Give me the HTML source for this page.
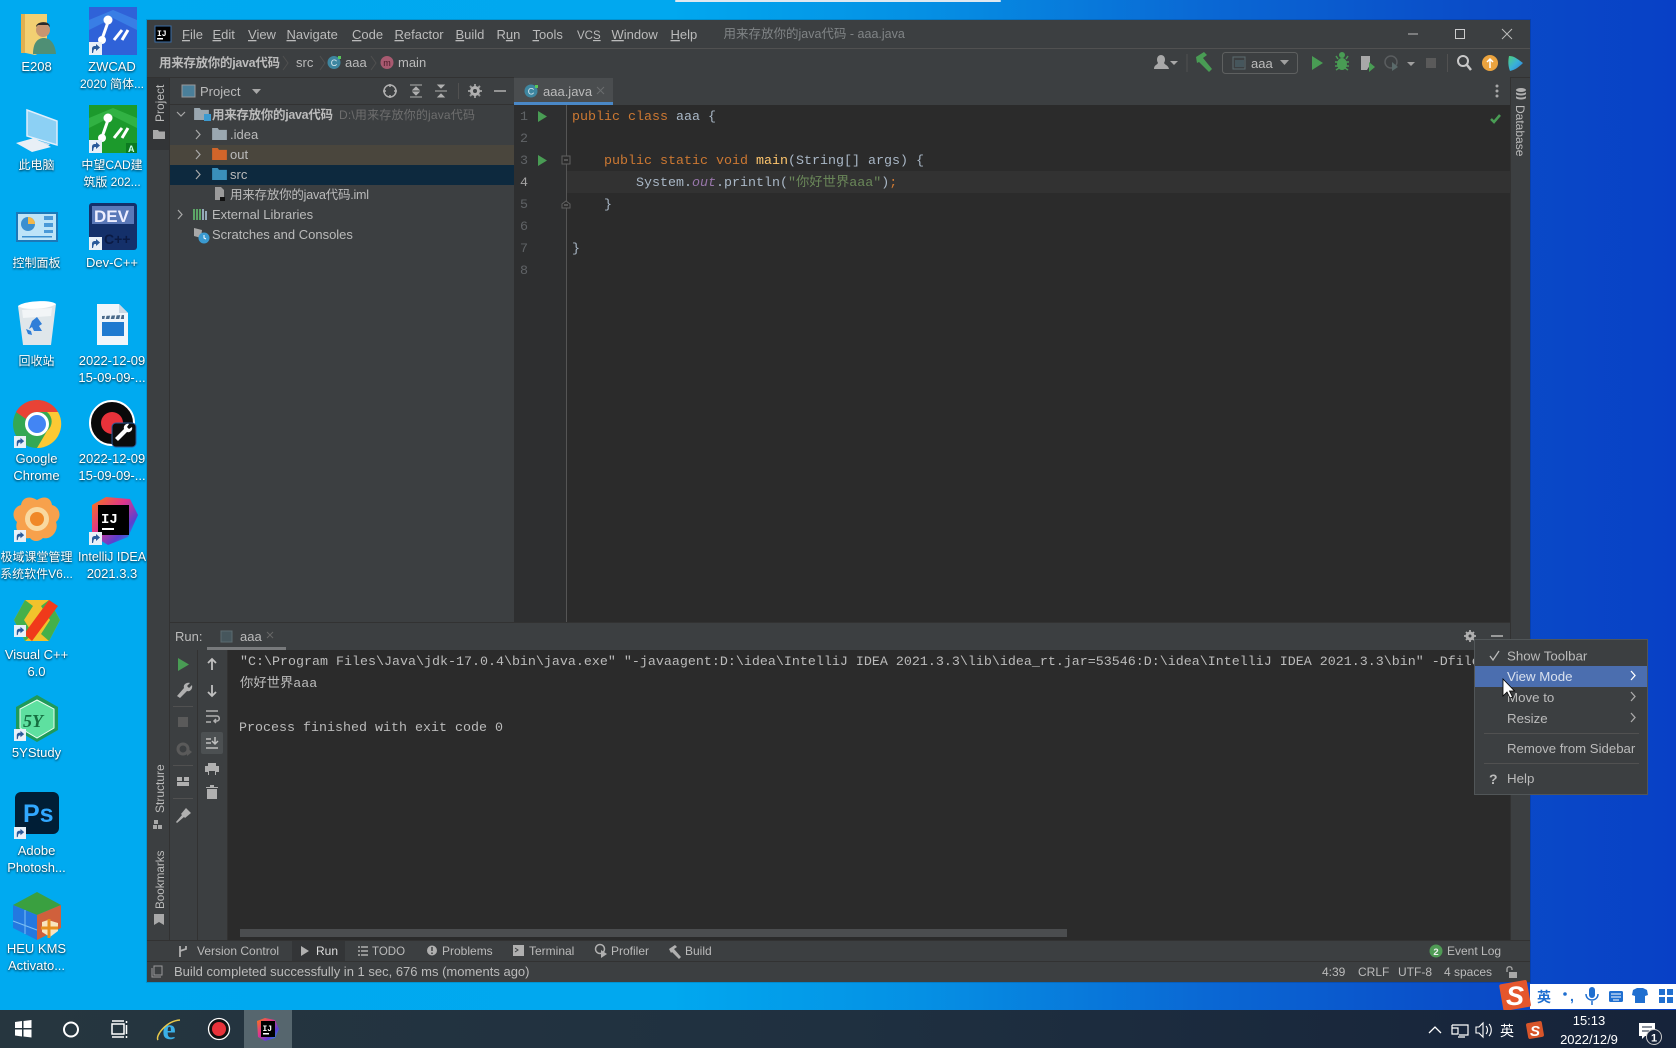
<!DOCTYPE html>
<html><head><meta charset="utf-8"><title>aaa.java</title>
<style>
html,body{margin:0;padding:0;width:1676px;height:1048px;overflow:hidden;background:linear-gradient(90deg,#00aaf0 0,#01a8ef 40%,#0590e4 55%,#0a68d4 72%,#0a4cc8 88%,#0840c6 100%)}
svg{position:absolute;left:0;top:0;display:block;filter:blur(.35px)}
text{font-family:"Liberation Sans","Noto Sans CJK SC",sans-serif;font-size:13px;fill:#bbb;white-space:pre}
.s12{font-size:12px}
.mono{font-family:"Liberation Mono","Noto Sans CJK SC",monospace;font-size:13.33px}
.k{fill:#cc7832}.t{fill:#a9b7c6}.n{fill:#606366}
.lb text{fill:#fff;text-anchor:middle}
.u{text-decoration:underline}
</style></head><body>
<svg width="1676" height="1048" viewBox="0 0 1676 1048" xmlns="http://www.w3.org/2000/svg">
<defs>
<symbol id="fd" viewBox="0 0 16 13" overflow="visible"><path d="M0 0h6l1.500 2H16v11H0z"/></symbol>
<symbol id="sc" viewBox="0 0 13 13" overflow="visible"><rect width="13" height="13" fill="#e8f0f8"/><path d="M3 11V7c0-2 1-3 3-3h1V2l4 3.500L7 9V7H6c-1 0-1.500 1-1.500 2l-.5 2z" fill="#2a5a9a"/></symbol>
<linearGradient id="tb" x1="0" x2="1"><stop offset="0" stop-color="#26363f"/><stop offset=".5" stop-color="#1f3040"/><stop offset="1" stop-color="#16233a"/></linearGradient>
<linearGradient id="dl" x1="0" y1="0" x2="1" y2="1"><stop offset="0" stop-color="#4fd07a"/><stop offset=".5" stop-color="#3ab0d8"/><stop offset="1" stop-color="#2a78d8"/></linearGradient>
<linearGradient id="ij" x1="0" y1="0" x2="1" y2="1"><stop offset="0" stop-color="#f97a12"/><stop offset=".4" stop-color="#e0358c"/><stop offset=".7" stop-color="#5a40d0"/><stop offset="1" stop-color="#17b8e8"/></linearGradient>
</defs>

<!-- top popup remnant -->
<rect x="675" y="0" width="326" height="2" rx="1" fill="#dfe8f0"/>

<!-- desktop icons -->
<!-- E208 -->
<path d="M21 14h26v36l-12 5-14-3z" fill="#f2cf72"/><path d="M21 14h4v39h-4z" fill="#e0b050"/>
<circle cx="43" cy="30" r="7" fill="#c89570"/><path d="M36 27c0-6 14-7 14 0l-2-2h-10z" fill="#2a2a2a"/>
<path d="M33 54c0-13 6-16 11-16s11 4 12 16z" fill="#4f8f75"/>
<!-- ZWCAD -->
<rect x="89" y="7" width="48" height="48" fill="#2f62d8"/><path d="M89 20l24-10 24 10v10l-24-12-24 12z" fill="#3c86e8" opacity=".8"/>
<path d="M101 42l7-20M114 40l8-10M122 40l6-10" stroke="#fff" stroke-width="3" fill="none"/><circle cx="108" cy="20" r="4.500" fill="#fff"/><circle cx="102" cy="40" r="4" fill="#fff"/>
<use href="#sc" x="89" y="42" width="13" height="13"/>
<!-- This PC -->
<path d="M27 110l30 11v24l-30-9z" fill="#8cd0f4" stroke="#dfeefb" stroke-width="1.500"/><path d="M40 141l10 3-4 4-10-2z" fill="#cde"/><path d="M16 143l18-5 17 9-19 5z" fill="#e8eff6"/>
<!-- Control panel -->
<rect x="16" y="212" width="42" height="30" fill="#1c78b8"/><rect x="18" y="214" width="38" height="26" fill="#bde4f8"/><circle cx="28" cy="224" r="7" fill="#3a8fd0"/><path d="M28 224v-7a7 7 0 017 7z" fill="#f2b84a"/><rect x="44" y="216" width="9" height="4" fill="#4a9ad8"/><rect x="44" y="223" width="9" height="4" fill="#4a9ad8"/><rect x="44" y="230" width="9" height="3" fill="#4a9ad8"/><rect x="22" y="236" width="30" height="1.500" fill="#3a8fd0"/>
<!-- 中望 -->
<rect x="89" y="105" width="48" height="48" fill="#1c9a2c"/><path d="M89 118l24-10 24 10v10l-24-12-24 12z" fill="#37b84a" opacity=".8"/>
<path d="M101 140l7-20M114 138l8-10M122 138l6-10" stroke="#fff" stroke-width="3" fill="none"/><circle cx="108" cy="118" r="4.500" fill="#fff"/><circle cx="102" cy="138" r="4" fill="#fff"/>
<rect x="126" y="143" width="11" height="10" fill="#0c7a20"/><text x="128" y="152" style="font-size:9px;font-weight:bold;fill:#cfe">A</text>
<use href="#sc" x="89" y="140" width="13" height="13"/>
<!-- Dev -->
<rect x="89" y="203" width="48" height="47" rx="3" fill="#14306a"/><rect x="92" y="206" width="42" height="18" fill="#5a78b8"/><text x="94" y="222" style="font-size:17px;font-weight:bold;fill:#eef">DEV</text><text x="104" y="244" style="font-size:14px;font-weight:bold;fill:#0a1a44">C++</text>
<use href="#sc" x="89" y="237" width="13" height="13"/>
<!-- Recycle -->
<path d="M18 306l38-2-5 41H23z" fill="#dfe6ea"/><path d="M18 306c5-5 33-7 38-2-6 5-32 7-38 2z" fill="#fff"/><path d="M22 310l30-2-1 8-28 2z" fill="#f2f5f7"/><path d="M37 317l5 7-3 2 3 5h-8l-2-4-3 2 3-8zM26 329l5 2 1 4-4-1z" fill="#2f7ed8"/>
<!-- Video file -->
<path d="M97 304h22l9 9v32H97z" fill="#f0f5fa"/><path d="M119 304l9 9h-9z" fill="#cbd8e4"/><rect x="102" y="322" width="22" height="14" fill="#1f7ad0"/><path d="M102 316l22-1v4h-22z" fill="#4a6a8a"/><path d="M106 315l-1 4m6-4l-1 4m6-4l-1 4m6-4l-1 4" stroke="#f0f5fa" stroke-width="1.500"/>
<!-- Chrome -->
<circle cx="37" cy="424" r="24" fill="#34a853"/><path d="M37 400a24 24 0 0121 12H37a12 12 0 00-11 7L16 412a24 24 0 0121-12z" fill="#e94335"/><path d="M58 412a24 24 0 01-21 36l10-17a12 12 0 000-19z" fill="#fcc934"/><circle cx="37" cy="424" r="12" fill="#fff"/><circle cx="37" cy="424" r="9" fill="#4285f4"/>
<use href="#sc" x="14" y="436" width="12" height="12"/>
<!-- Recorder tool -->
<circle cx="112" cy="423" r="22" fill="#0a0a0a" stroke="#fff" stroke-width="2"/><circle cx="112" cy="423" r="11" fill="#e8323a"/><rect x="112" y="423" width="24" height="24" rx="4" fill="#0c0c0c" stroke="#2a5a9a"/><path d="M118 441l9-9c3 1 6-2 5-5l-3 2-2-2 2-3c-3-1-6 2-5 5l-9 9z" fill="#fff"/>
<!-- Jiyu -->
<path d="M37 500c8-5 14-2 15 5 8 2 10 12 4 17 3 8-4 18-13 16-4 4-10 4-13 0-9 2-16-8-13-16-6-5-4-15 4-17 1-7 8-10 16-5z" fill="#f7a14c"/><circle cx="37" cy="519" r="12" fill="#f9d9a0"/><circle cx="37" cy="519" r="7" fill="#f08828"/>
<use href="#sc" x="14" y="530" width="12" height="12"/>
<!-- IDEA -->
<path d="M92 505l14-8 24 2 8 16-10 22-20 8-16-10z" fill="url(#ij)"/><rect x="98" y="505" width="31" height="30" fill="#000"/><text x="101" y="523" style="font-size:14px;font-weight:bold;fill:#fff;font-family:'Liberation Mono',monospace">IJ</text><rect x="102" y="528" width="12" height="2" fill="#fff"/>
<use href="#sc" x="89" y="532" width="13" height="13"/>
<!-- VC -->
<path d="M25 600h24l11 20-11 21H25L14 620z" fill="#f2c22c"/><path d="M14 620l11-20 8 6-9 14 9 14-8 7z" fill="#44b04a"/><path d="M60 620l-11-20-8 6 9 14-9 14 8 7z" fill="#44b04a"/><path d="M24 634l25-34 9 6-26 35z" fill="#f03a1a"/>
<use href="#sc" x="14" y="625" width="12" height="12"/>
<!-- 5Y -->
<path d="M37 695l21 12v23l-21 12-21-12v-23z" fill="#1f9a5a"/><path d="M37 700l17 9v19l-17 10-17-10v-19z" fill="#5ee0a0" stroke="#e8fff0"/><text x="23" y="727" style="font-size:18px;font-style:italic;font-weight:bold;fill:#156e40;font-family:'Liberation Serif',serif">5Y</text>
<use href="#sc" x="14" y="729" width="12" height="12"/>
<!-- PS -->
<rect x="15" y="792" width="44" height="42" rx="6" fill="#001e36"/><text x="23" y="822" style="font-size:25px;font-weight:bold;fill:#31a8ff">Ps</text>
<use href="#sc" x="14" y="827" width="12" height="12"/>
<!-- HEU -->
<path d="M13 905l24-13 24 13-24 10z" fill="#3aa040"/><path d="M13 905l24 10v25l-24-12z" fill="#2478e0"/><path d="M61 905l-24 10v25l24-12z" fill="#d0603c"/><path d="M42 922l6-2 10 3v8l-8 6-8-5z" fill="#f8e4c0"/><path d="M49 919v19M41 928h17" stroke="#e89020" stroke-width="3"/><path d="M25 910v24M13 921l24 9" stroke="#7cc0f4" stroke-width="1"/>

<g class="lb" style="filter:drop-shadow(0 1px 1px rgba(0,0,0,.85))">
<text x="36.500" y="71">E208</text>
<text x="112" y="71">ZWCAD</text><text x="112" y="88" class="s12">2020 简体...</text>
<text x="36.500" y="169" class="s12">此电脑</text>
<text x="112" y="169" class="s12">中望CAD建</text><text x="112" y="186" class="s12">筑版 202...</text>
<text x="36.500" y="267" class="s12">控制面板</text>
<text x="112" y="267">Dev-C++</text>
<text x="36.500" y="365" class="s12">回收站</text>
<text x="112" y="365">2022-12-09</text><text x="112" y="382">15-09-09-...</text>
<text x="36.500" y="463">Google</text><text x="36.500" y="480">Chrome</text>
<text x="112" y="463">2022-12-09</text><text x="112" y="480">15-09-09-...</text>
<text x="36.500" y="561" class="s12">极域课堂管理</text><text x="36.500" y="578" class="s12">系统软件V6...</text>
<text x="112" y="561" style="font-size:12.500px">IntelliJ IDEA</text><text x="112" y="578">2021.3.3</text>
<text x="36.500" y="659">Visual C++</text><text x="36.500" y="676">6.0</text>
<text x="36.500" y="757">5YStudy</text>
<text x="36.500" y="855">Adobe</text><text x="36.500" y="872">Photosh...</text>
<text x="36.500" y="953">HEU KMS</text><text x="36.500" y="970">Activato...</text>
</g>

<!-- IDE window -->
<rect x="146" y="19" width="1385" height="964" fill="#000" opacity=".12"/>
<rect x="147" y="20" width="1383" height="962" fill="#3c3f41"/>
<!-- title -->
<rect x="147" y="20" width="1383" height="28" fill="#3c3f41"/>
<rect x="147" y="48" width="1383" height="1" fill="#515151"/>
<rect x="155" y="26" width="16" height="16" fill="#000" stroke="#3a6ea8"/><text x="157" y="36" style="font-size:8px;font-weight:bold;fill:#fff;font-family:'Liberation Mono',monospace">IJ</text><rect x="157" y="38" width="6" height="1.500" fill="#fff"/>
<text x="182" y="39"><tspan class="u">F</tspan>ile</text>
<text x="212.500" y="39"><tspan class="u">E</tspan>dit</text>
<text x="248" y="39"><tspan class="u">V</tspan>iew</text>
<text x="286.500" y="39"><tspan class="u">N</tspan>avigate</text>
<text x="352" y="39"><tspan class="u">C</tspan>ode</text>
<text x="394.500" y="39"><tspan class="u">R</tspan>efactor</text>
<text x="455.500" y="39"><tspan class="u">B</tspan>uild</text>
<text x="496.500" y="39">R<tspan class="u">u</tspan>n</text>
<text x="532.500" y="39"><tspan class="u">T</tspan>ools</text>
<text x="577" y="39" style="font-size:11.500px">VC<tspan class="u">S</tspan></text>
<text x="611.500" y="39"><tspan class="u">W</tspan>indow</text>
<text x="670.500" y="39"><tspan class="u">H</tspan>elp</text>
<text x="723.500" y="38" style="fill:#808486;font-size:12.500px">用来存放你的java代码 - aaa.java</text>
<path d="M1408 34h10" stroke="#bbb" stroke-width="1"/><rect x="1455.500" y="29.500" width="9" height="9" fill="none" stroke="#ccc"/><path d="M1502 29l10 10m0-10l-10 10" stroke="#bbb" stroke-width="1"/>

<!-- breadcrumb -->
<rect x="147" y="77" width="1383" height="1" fill="#323232"/>
<text x="159" y="67" style="font-weight:bold;font-size:12.500px" textLength="121">用来存放你的java代码</text>
<path d="M283 56l5 7-5 7" stroke="#505050" fill="none"/>
<text x="296" y="67">src</text>
<path d="M320 56l5 7-5 7" stroke="#505050" fill="none"/>
<circle cx="334" cy="62.500" r="6.500" fill="#3e86a0"/><text x="334" y="66" text-anchor="middle" style="font-size:9px;fill:#d8e8ee">C</text><path d="M338 56l3 0 0 3-3 0z" fill="#5ac85a"/>
<text x="345" y="67">aaa</text>
<path d="M371 56l5 7-5 7" stroke="#505050" fill="none"/>
<circle cx="387" cy="62.500" r="6.500" fill="#a85a70"/><text x="387" y="66" text-anchor="middle" style="font-size:9px;fill:#4a1a28">m</text>
<text x="398" y="67">main</text>

<!-- right toolbar -->
<path d="M1154 69c0-4 3-4 4-6-2-3-1-8 3-8s5 5 3 8c1 2 4 2 5 6z" fill="#a8a8a8"/><path d="M1170 61h8l-4 4z" fill="#a8a8a8"/>
<rect x="1186.500" y="54" width="1" height="18" fill="#515151"/>
<path d="M1196 57l8-5 3 3-4 3 9 11-3 3-10-10-2 1z" fill="#499c54"/>
<rect x="1222.500" y="52.500" width="75" height="21" rx="3" fill="none" stroke="#5e6060"/>
<rect x="1233" y="57" width="12" height="12" fill="none" stroke="#5b6b70"/><rect x="1235" y="60" width="9" height="7" fill="#46565c"/>
<text x="1251" y="68" style="font-size:13px">aaa</text>
<path d="M1280 60h9l-4.500 5z" fill="#a0a0a0"/>
<path d="M1312 56l11 7-11 7z" fill="#499c54"/>
<ellipse cx="1342" cy="64" rx="5" ry="6" fill="#499c54"/><path d="M1336 56l2 3m10-3l-2 3m-11 3h3m8 0h3m-14 4h3m8 0h3m-13 4l3-2m6 0l3 2" stroke="#499c54" stroke-width="1.500"/><circle cx="1342" cy="55" r="3" fill="#499c54"/>
<path d="M1361 56h9v9l-3 5h-6z" fill="#a8a8a8"/><path d="M1369 62l6 5-6 5z" fill="#499c54"/>
<circle cx="1391" cy="62" r="6" fill="none" stroke="#5a5d5f" stroke-width="1.500"/><path d="M1392 62l6 5-6 4z" fill="#5a6a6a"/>
<path d="M1407 62h8l-4 4z" fill="#a0a0a0"/>
<rect x="1426" y="58" width="10" height="10" fill="#5a5a5a"/>
<rect x="1447" y="54" width="1" height="18" fill="#515151"/>
<circle cx="1463" cy="61" r="5" fill="none" stroke="#c8c8c8" stroke-width="2"/><path d="M1467 65l4 5" stroke="#c8c8c8" stroke-width="2.500"/>
<circle cx="1490" cy="63" r="8" fill="#eba33e"/><path d="M1490 68v-9m-3 3l3-3 3 3" stroke="#fff" fill="none" stroke-width="1.500"/>
<path d="M1509 56c5 0 7 2 14 7-4 4-8 7-13 8-2-5-2-10-1-15z" fill="url(#dl)"/>

<!-- left strip -->
<rect x="147" y="78" width="22" height="72" fill="#333537"/>
<rect x="169" y="78" width="1" height="862" fill="#323232"/>
<text transform="translate(164,122) rotate(-90)" style="font-size:12px">Project</text>
<path d="M153 130h5l1 1.500h6v7.500h-12z" fill="#a8a8a8"/>
<text transform="translate(164,813) rotate(-90)" style="font-size:12px">Structure</text>
<path d="M154 820h4v4h-4zm-1 5h4v4h-4zm5 0h4v4h-4z" fill="#a8a8a8"/>
<text transform="translate(164,909) rotate(-90)" style="font-size:11.700px">Bookmarks</text>
<path d="M154 914h10v11l-5-3-5 3z" fill="#a8a8a8"/>

<!-- project header -->
<rect x="182" y="85" width="13" height="12" fill="#4a7f9a" stroke="#9a9a9a"/>
<text x="200" y="96">Project</text>
<path d="M252 89h9l-4.500 5z" fill="#a8a8a8"/>
<circle cx="390" cy="91" r="6" fill="none" stroke="#b0b0b0" stroke-width="1.500"/><path d="M390 84v3m0 8v3m-7-7h3m8 0h3" stroke="#b0b0b0" stroke-width="1.500"/>
<path d="M410 85h12M410 97h12M413 90l3-3 3 3zM413 92l3 3 3-3z" stroke="#b0b0b0" fill="#b0b0b0"/>
<path d="M435 91h12M438 85l3 3 3-3zM438 97l3-3 3 3z" stroke="#b0b0b0" fill="#b0b0b0"/>
<rect x="458" y="83" width="1" height="16" fill="#515151"/>
<circle cx="475" cy="91" r="3.500" fill="none" stroke="#b0b0b0" stroke-width="3"/><path d="M475 84v14m-7-7h14m-12-5l10 10m0-10l-10 10" stroke="#b0b0b0" stroke-width="2" opacity=".8"/><circle cx="475" cy="91" r="2" fill="#3c3f41"/>
<path d="M494 91h12" stroke="#b0b0b0" stroke-width="1.500"/>
<rect x="170" y="104" width="344" height="1" fill="#323232"/>

<!-- tree -->
<rect x="170" y="145" width="344" height="20" fill="#4a463d"/>
<rect x="170" y="165" width="344" height="20" fill="#0d293e"/>
<path d="M177 112l4 4 4-4" stroke="#a8a8a8" fill="none" stroke-width="1.200"/>
<path d="M196 130l4 4.500-4 4.500M196 150l4 4.500-4 4.500M196 170l4 4.500-4 4.500M178 210l4 4.500-4 4.500" stroke="#a8a8a8" fill="none" stroke-width="1.200"/>
<use href="#fd" x="194" y="108" width="15" height="12" fill="#9aa7b0"/><rect x="204" y="114" width="7" height="7" fill="#3c9ad0"/>
<text x="212" y="119" style="font-weight:bold;font-size:12.500px" textLength="121">用来存放你的java代码</text>
<text x="339" y="119" style="fill:#6e6e6e;font-size:12px" textLength="136">D:\用来存放你的java代码</text>
<use href="#fd" x="212" y="128" width="15" height="12" fill="#9aa7b0"/><text x="230" y="139">.idea</text>
<use href="#fd" x="212" y="148" width="15" height="12" fill="#d2652a"/><text x="230" y="159">out</text>
<use href="#fd" x="212" y="168" width="15" height="12" fill="#3a8fba"/><text x="230" y="179">src</text>
<path d="M215 187h6l3 3v10h-9z" fill="#9a9a9a"/><rect x="220" y="197" width="5" height="4" fill="#111"/>
<text x="230" y="199" style="font-size:12.500px" textLength="139">用来存放你的java代码.iml</text>
<path d="M194 209v11m3-11v11m3-11v11" stroke="#5fb26a" stroke-width="1.800"/><path d="M203 209v11m3-9v9" stroke="#9fb6c8" stroke-width="1.800"/>
<text x="212" y="219">External Libraries</text>
<path d="M194 228l8 2-1 8-7-2z" fill="#a8a8a8"/><circle cx="204" cy="238" r="5.500" fill="#3a9ad0"/><path d="M204 235v3l2 1" stroke="#fff" fill="none"/>
<text x="212" y="239">Scratches and Consoles</text>

<!-- tab -->
<rect x="514" y="77" width="996" height="27" fill="#3c3f41"/>
<rect x="514" y="78" width="99" height="26" fill="#4a4d4f"/>
<rect x="514" y="102" width="99" height="3" fill="#4a88c7"/>
<circle cx="531" cy="91" r="6.500" fill="#3e86a0"/><text x="531" y="94.500" text-anchor="middle" style="font-size:9px;fill:#d8e8ee">C</text><path d="M535 85h3v3h-3z" fill="#5ac85a"/>
<text x="543" y="96">aaa.java</text>
<path d="M597 87l7 7m0-7l-7 7" stroke="#6a6d6f" stroke-width="1"/>
<circle cx="1497" cy="86" r="1.500" fill="#a8a8a8"/><circle cx="1497" cy="91" r="1.500" fill="#a8a8a8"/><circle cx="1497" cy="96" r="1.500" fill="#a8a8a8"/>

<!-- editor -->
<rect x="514" y="105" width="996" height="517" fill="#2b2b2b"/>
<rect x="514" y="105" width="52" height="517" fill="#2e2f30"/>
<rect x="566" y="171" width="944" height="22" fill="#323232"/>
<rect x="566" y="105" width="1" height="517" fill="#555"/>
<text class="mono n" x="520" y="120">1</text><text class="mono n" x="520" y="142">2</text><text class="mono n" x="520" y="164">3</text><text class="mono" x="520" y="186" style="fill:#a4a3a3">4</text><text class="mono n" x="520" y="208">5</text><text class="mono n" x="520" y="230">6</text><text class="mono n" x="520" y="252">7</text><text class="mono n" x="520" y="274">8</text>
<path d="M538 111l9 5.500-9 5.500zM538 155l9 5.500-9 5.500z" fill="#499c54"/>
<rect x="562" y="156" width="8" height="8" fill="#2b2b2b" stroke="#606060"/><path d="M564 160h4" stroke="#808080"/>
<path d="M562 208h8v-4l-4-3-4 3z" fill="#2b2b2b" stroke="#606060"/><path d="M564 205h4" stroke="#808080"/>
<text class="mono" x="572" y="120"><tspan class="k">public class </tspan><tspan class="t">aaa {</tspan></text>
<text class="mono" x="604" y="164"><tspan class="k">public static void </tspan><tspan style="fill:#ffc66d">main</tspan><tspan class="t">(String[] args) {</tspan></text>
<text class="mono" x="636" y="186"><tspan class="t">System.</tspan><tspan style="fill:#9876aa;font-style:italic">out</tspan><tspan class="t">.println(</tspan><tspan style="fill:#6a8759">"你好世界aaa"</tspan><tspan class="t">)</tspan><tspan class="k">;</tspan></text>
<text class="mono t" x="604" y="208">}</text>
<text class="mono t" x="572" y="252">}</text>
<path d="M1491 119l3 3 6-7" stroke="#499c54" stroke-width="2.500" fill="none"/>

<!-- right strip -->
<rect x="1510" y="78" width="1" height="862" fill="#323232"/>
<ellipse cx="1521" cy="90" rx="5" ry="2" fill="#b0b0b0"/><path d="M1516 92c1 2 9 2 10 0v2c-1 2-9 2-10 0zm0 4c1 2 9 2 10 0v2c-1 2-9 2-10 0z" fill="#b0b0b0"/>
<text transform="translate(1516,105) rotate(90)" style="font-size:12px">Database</text>

<!-- run panel -->
<rect x="170" y="622" width="1340" height="1" fill="#323232"/>
<rect x="170" y="623" width="1340" height="27" fill="#3c3f41"/>
<text x="175" y="641">Run:</text>
<rect x="221" y="631" width="11" height="11" fill="#46565c" stroke="#5b6b70"/>
<text x="240" y="641">aaa</text>
<path d="M267 632l6 6m0-6l-6 6" stroke="#666" stroke-width="1"/>
<rect x="207" y="647" width="79" height="3" fill="#787a7c"/>
<circle cx="1470" cy="636" r="3" fill="none" stroke="#b0b0b0" stroke-width="3"/><path d="M1470 630v12m-6-6h12m-10-4l8 8m0-8l-8 8" stroke="#b0b0b0" stroke-width="1.800"/><circle cx="1470" cy="636" r="1.500" fill="#3c3f41"/>
<path d="M1491 636h12" stroke="#b8b8b8" stroke-width="1.500"/>

<rect x="170" y="650" width="57" height="290" fill="#3c3f41"/>
<rect x="197" y="650" width="1" height="290" fill="#323232"/>
<rect x="227" y="650" width="1" height="290" fill="#323232"/>
<rect x="228" y="650" width="1282" height="290" fill="#2b2b2b"/>
<path d="M178 658l11 6.500-11 6.500z" fill="#499c54"/>
<path d="M177 696l7-8c-1-3 2-6 6-5l-3 3 2 2 3-3c1 4-2 7-5 6l-7 7z" fill="#b0b0b0"/>
<rect x="173" y="706" width="20" height="1" fill="#515151"/>
<rect x="178" y="717" width="10" height="10" fill="#5a5a5a"/>
<circle cx="183" cy="749" r="5" fill="none" stroke="#5a5a5a" stroke-width="3"/><path d="M187 748l5 4-5 4z" fill="#5a5a5a"/>
<rect x="173" y="765" width="20" height="1" fill="#515151"/>
<path d="M177 777h5v4h-5zM184 777h5v4h-5zM177 782h12v4h-12z" fill="#b0b0b0"/>
<rect x="173" y="798" width="20" height="1" fill="#515151"/>
<path d="M176 822l6-7-1-1 5-6 5 5-6 5-1-1-7 6z" fill="#b0b0b0"/>
<path d="M212 670v-11m-4 4l4-4 4 4M212 685v11m-4-4l4 4 4-4" stroke="#c0c0c0" stroke-width="1.800" fill="none"/>
<path d="M206 711h12M206 716h11c3 0 3 5 0 5h-3m2-2l-2 2 2 2M206 722h5" stroke="#b0b0b0" stroke-width="1.500" fill="none"/>
<rect x="201" y="732" width="22" height="22" rx="2" fill="#4c5052"/>
<path d="M206 739h5m-5 4h5m-5 5h12M215 737v7m-3-3l3 3 3-3" stroke="#c0c0c0" stroke-width="1.500" fill="none"/>
<path d="M208 763h8v3h3v6h-3v3h-8v-3h-3v-6h3z" fill="#b0b0b0"/><rect x="209" y="771" width="6" height="4" fill="#3c3f41"/>
<path d="M207 789h10v10h-10zM206 787h12v1h-12zM210 785h4v2h-4z" fill="#b0b0b0"/>

<text class="mono" x="240" y="665">"C:\Program Files\Java\jdk-17.0.4\bin\java.exe" "-javaagent:D:\idea\IntelliJ IDEA 2021.3.3\lib\idea_rt.jar=53546:D:\idea\IntelliJ IDEA 2021.3.3\bin" -Dfile</text>
<text class="mono" x="240" y="687">你好世界aaa</text>
<text class="mono" x="239" y="731">Process finished with exit code 0</text>
<rect x="240" y="929" width="827" height="8" fill="#4b4d4f"/>

<!-- bottom toolbar -->
<rect x="147" y="940" width="1383" height="1" fill="#323232"/>
<rect x="147" y="961" width="1383" height="1" fill="#323232"/>
<rect x="292" y="941" width="53" height="20" fill="#333537"/>
<g class="s12">
<path d="M180 946v11m0-6l6-2v-3m-6 11l0-1" stroke="#b0b0b0" stroke-width="1.800" fill="none"/>
<text x="197" y="955" class="s12" style="fill:#bbb">Version Control</text>
<path d="M301 946l8 5-8 5z" fill="#b0b0b0"/>
<text x="316" y="955" class="s12" style="fill:#ddd">Run</text>
<path d="M358 947h2m1 0h7M358 951h2m1 0h7M358 955h2m1 0h7" stroke="#b0b0b0" stroke-width="1.500"/>
<text x="372" y="955" class="s12" style="font-size:11.500px">TODO</text>
<circle cx="432" cy="950.500" r="5" fill="#b0b0b0"/><path d="M432 947v4m0 1.500v1.500" stroke="#3c3f41" stroke-width="1.500"/>
<text x="442" y="955" class="s12">Problems</text>
<rect x="513" y="945" width="11" height="11" fill="#b0b0b0"/><path d="M515 948l3 2-3 2" stroke="#3c3f41" fill="none"/>
<text x="529" y="955" class="s12">Terminal</text>
<circle cx="600" cy="949" r="4.500" fill="none" stroke="#b0b0b0" stroke-width="1.500"/><path d="M601 950l6 4-6 4z" fill="#b0b0b0"/>
<text x="611" y="955" class="s12">Profiler</text>
<path d="M669 949l6-4 2 2-3 2 7 8-2 2-7-7-1 1z" fill="#b0b0b0"/>
<text x="685" y="955" class="s12">Build</text>
<circle cx="1436" cy="951" r="6.500" fill="#4f9a55"/><text x="1436" y="955" text-anchor="middle" style="font-size:9.500px;font-weight:bold;fill:#eee">2</text>
<text x="1447" y="955" class="s12">Event Log</text>
</g>

<!-- status -->
<path d="M154 966h8v9h-8zM152 968v9h9" stroke="#9a9a9a" fill="none"/>
<text x="174" y="976" style="font-size:13px">Build completed successfully in 1 sec, 676 ms (moments ago)</text>
<text x="1322" y="976" class="s12">4:39</text>
<text x="1358" y="976" class="s12">CRLF</text>
<text x="1398" y="976" class="s12">UTF-8</text>
<text x="1444" y="976" class="s12">4 spaces</text>
<path d="M1507 972v-3c0-3 5-3 5 0v1" stroke="#a8a8a8" fill="none" stroke-width="1.300"/><rect x="1509" y="972" width="8" height="6" fill="#a8a8a8"/>

<!-- popup -->
<rect x="1474.500" y="639.500" width="173" height="155" fill="#3c3f41" stroke="#515658"/>
<rect x="1475" y="666" width="172" height="21" fill="#4b6eaf"/>
<path d="M1490 656l3 4 6-9" stroke="#bbb" stroke-width="1.300" fill="none"/>
<text x="1507" y="660.500" style="font-size:13.300px">Show Toolbar</text>
<text x="1507" y="681" style="font-size:13.300px;fill:#d8e0ee">View Mode</text>
<path d="M1631 671l4 4.500-4 4.500" stroke="#fff" fill="none" stroke-width="1.300"/>
<text x="1507" y="702" style="font-size:13.300px">Move to</text>
<path d="M1631 692l4 4.500-4 4.500" stroke="#aaa" fill="none" stroke-width="1.300"/>
<text x="1507" y="723" style="font-size:13.300px">Resize</text>
<path d="M1631 713l4 4.500-4 4.500" stroke="#aaa" fill="none" stroke-width="1.300"/>
<rect x="1484" y="733" width="155" height="1" fill="#515151"/>
<text x="1507" y="753" style="font-size:13.200px">Remove from Sidebar</text>
<rect x="1484" y="763" width="155" height="1" fill="#515151"/>
<text x="1489" y="784" style="font-size:14px;font-weight:bold">?</text>
<text x="1507" y="783" style="font-size:13.300px">Help</text>
<path d="M1503 679v17l4-4 3 6 2.500-1-3-6h5z" fill="#fff" stroke="#000" stroke-width=".8"/>

<!-- sogou bar -->
<rect x="1530" y="984" width="146" height="25" fill="#fff"/>
<g transform="rotate(-10 1515 995)"><rect x="1501" y="982" width="28" height="27" rx="2" fill="#e5562c"/></g>
<text x="1515" y="1005" text-anchor="middle" style="font-size:27px;font-weight:bold;font-style:italic;fill:#fff">S</text>
<text x="1544" y="1002" text-anchor="middle" style="font-size:14px;font-weight:bold;fill:#1f6fd0">英</text>
<circle cx="1565" cy="994" r="1.800" fill="#1f6fd0"/><text x="1572" y="1001" text-anchor="middle" style="font-size:14px;font-weight:bold;fill:#1f6fd0">,</text>
<rect x="1589" y="987" width="6" height="11" rx="3" fill="#1f6fd0"/><path d="M1586 994c0 8 12 8 12 0M1592 1001v4" stroke="#1f6fd0" fill="none" stroke-width="1.500"/>
<rect x="1609" y="991" width="14" height="11" rx="1.500" fill="#1f6fd0"/><path d="M1611 994h10M1611 997h10M1613 1000h6" stroke="#fff"/>
<path d="M1633 990l4-2h6l4 2 1 5-3 1v7h-10v-7l-3-1z" fill="#1f6fd0"/>
<path d="M1659 989h6v6h-6zM1667 989h6v6h-6zM1659 997h6v6h-6zM1667 997h6v6h-6z" fill="#1f6fd0"/>

<!-- taskbar -->
<rect x="0" y="1010" width="1676" height="38" fill="url(#tb)"/>
<path d="M15 1022l7-1v7h-7zM23.500 1021l8-1v8h-8zM15 1029.500h7v7l-7-1zM23.500 1029.500h8v8l-8-1z" fill="#fff"/>
<circle cx="71" cy="1029.500" r="7" fill="none" stroke="#fff" stroke-width="2"/>
<path d="M112 1024h12v10h-12zM112 1021h12M112 1037h12M126.500 1021v2m0 2v9m0 2v2" stroke="#fff" fill="none" stroke-width="1.500"/>
<text x="169" y="1039" text-anchor="middle" style="font-size:30px;font-family:'Liberation Serif',serif;font-weight:bold;fill:#3ab0e8">e</text>
<path d="M158 1040c-3-4 8-19 22-20" stroke="#e8c84a" fill="none" stroke-width="1.500"/>
<circle cx="219" cy="1029" r="10.500" fill="#111" stroke="#fff" stroke-width="1.300"/><circle cx="219" cy="1029" r="7" fill="#e8323a"/>
<rect x="244" y="1010" width="48" height="38" fill="#56666e"/>
<path d="M257 1021l8-3 10 2 4 9-4 9-10 3-7-4z" fill="url(#ij)"/><rect x="261" y="1021" width="14" height="16" fill="#000"/><text x="262.500" y="1031" style="font-size:8px;font-weight:bold;fill:#fff;font-family:'Liberation Mono',monospace">IJ</text><rect x="263" y="1033" width="6" height="1.500" fill="#fff"/>
<path d="M1429 1033l6-6 6 6" stroke="#fff" fill="none" stroke-width="1.300"/>
<path d="M1452 1025h16v10h-9M1452 1025v9h6v-6h-6M1458 1037h7" stroke="#fff" fill="none" stroke-width="1.200"/>
<path d="M1476 1027h3l4-4v14l-4-4h-3zM1486 1026c2 2 2 6 0 8M1489 1024c3 3 3 9 0 12" stroke="#fff" fill="none" stroke-width="1.100"/>
<text x="1507" y="1036" text-anchor="middle" style="font-size:14px;fill:#fff">英</text>
<g transform="rotate(-10 1535 1030)"><rect x="1527" y="1022" width="16" height="16" rx="2" fill="#d8552a"/></g>
<text x="1535" y="1036" text-anchor="middle" style="font-size:15px;font-weight:bold;font-style:italic;fill:#fff">S</text>
<text x="1589" y="1025" text-anchor="middle" style="font-size:13px;fill:#fff">15:13</text>
<text x="1589" y="1044" text-anchor="middle" style="font-size:13px;fill:#fff">2022/12/9</text>
<path d="M1639 1023h16v13h-10l-3 3v-3h-3z" fill="#fff"/><path d="M1642 1027h10M1642 1031h8" stroke="#16233a"/>
<circle cx="1654" cy="1037" r="7.500" fill="#16233a" stroke="#ccc"/><text x="1654" y="1041.500" text-anchor="middle" style="font-size:11px;font-weight:bold;fill:#fff">1</text>
</svg>
</body></html>
